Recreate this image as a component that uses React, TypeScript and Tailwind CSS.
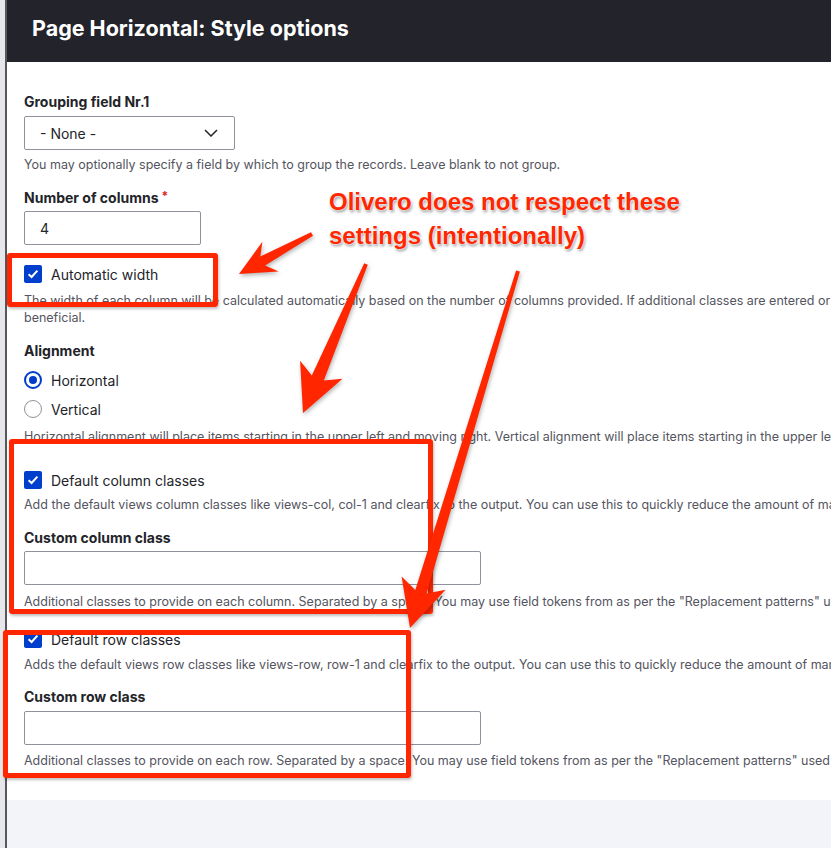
import React from "react"

type Pt = [number, number]

// tapered skitch-style arrow, shaft widens toward the head
function arrowPoints(tail: Pt, tip: Pt, tailW: number, baseW: number, headHalf: number, headLen: number) {
  const dx = tip[0] - tail[0]
  const dy = tip[1] - tail[1]
  const len = Math.hypot(dx, dy)
  const ux = dx / len
  const uy = dy / len
  const nx = -uy
  const ny = ux
  const bx = tip[0] - ux * headLen
  const by = tip[1] - uy * headLen
  const jx = tip[0] - ux * (headLen - 9)
  const jy = tip[1] - uy * (headLen - 9)
  const pts: Pt[] = [
    [tail[0] + (nx * tailW) / 2, tail[1] + (ny * tailW) / 2],
    [jx + (nx * baseW) / 2, jy + (ny * baseW) / 2],
    [bx + nx * headHalf, by + ny * headHalf],
    tip,
    [bx - nx * headHalf, by - ny * headHalf],
    [jx - (nx * baseW) / 2, jy - (ny * baseW) / 2],
    [tail[0] - (nx * tailW) / 2, tail[1] - (ny * tailW) / 2],
  ]
  return pts.map((p) => `${p[0].toFixed(1)},${p[1].toFixed(1)}`).join(" ")
}

function Checkbox({ label }: { label: string }) {
  return (
    <div className="flex h-[20px] items-center gap-[9px]">
      <span className="flex h-[18px] w-[18px] items-center justify-center rounded-[2px] bg-[#003ecc]">
        <svg width="12" height="10" viewBox="0 0 12 10">
          <path d="M1.6 5.2 4.6 8 10.4 1.6" fill="none" stroke="#fff" strokeWidth="2" />
        </svg>
      </span>
      <span className="text-[14px] text-[#232429]">{label}</span>
    </div>
  )
}

function Radio({ label, checked }: { label: string; checked?: boolean }) {
  return (
    <div className="flex h-[20px] items-center gap-[9px]">
      {checked ? (
        <span className="flex h-[18px] w-[18px] items-center justify-center rounded-full border-2 border-[#003ecc]">
          <span className="h-[8px] w-[8px] rounded-full bg-[#003ecc]" />
        </span>
      ) : (
        <span className="h-[18px] w-[18px] rounded-full border border-[#8e929c]" />
      )}
      <span className="text-[14px] text-[#232429]">{label}</span>
    </div>
  )
}

function Label({ children, required }: { children: React.ReactNode; required?: boolean }) {
  return (
    <div className="flex items-start text-[14px] leading-[18px] font-bold text-[#232429]">
      {children}
      {required && <span className="ml-[3px] text-[12px] leading-[14px] text-[#dc2323]">*</span>}
    </div>
  )
}

function Desc({ children }: { children: React.ReactNode }) {
  return <div className="whitespace-nowrap text-[12.5px] leading-[17px] text-[#545560]">{children}</div>
}

export default function App() {
  return (
    <div className="relative flex h-[848px] w-[831px] overflow-hidden bg-white [font-family:Inter,sans-serif]">
      <div className="w-[5px] shrink-0 bg-[#e6e7eb]" />
      <div className="w-[2px] shrink-0 bg-[#55565e]" />

      <div className="flex min-w-0 flex-1 flex-col overflow-hidden">
        {/* Header */}
        <div className="flex h-[62px] shrink-0 items-center bg-[#22232b] pl-[25px] pb-[6px]">
          <h1 className="whitespace-nowrap text-[21.5px] font-bold text-white">Page Horizontal: Style options</h1>
        </div>

        {/* Form */}
        <div className="flex h-[738px] shrink-0 flex-col bg-white px-[17px] pt-[31px]">
          <Label>Grouping field Nr.1</Label>
          <div className="mt-[5px] flex h-[34px] w-[211px] items-center justify-between rounded-[2px] border border-[#8e929c] pl-[15px] pr-[16px] text-[14px] text-[#232429]">
            <span>- None -</span>
            <svg width="14" height="8" viewBox="0 0 14 8">
              <path d="M1 1l6 6 6-6" fill="none" stroke="#232429" strokeWidth="1.5" />
            </svg>
          </div>
          <div className="mt-[6px]">
            <Desc>You may optionally specify a field by which to group the records. Leave blank to not group.</Desc>
          </div>

          <div className="mt-[16px]">
            <Label required>Number of columns</Label>
          </div>
          <div className="mt-[4px] flex h-[34px] w-[177px] items-center rounded-[2px] border border-[#8e929c] pl-[15px] text-[14px] text-[#232429]">
            4
          </div>

          <div className="mt-[19px]">
            <Checkbox label="Automatic width" />
          </div>
          <div className="mt-[8px]">
            <Desc>
              The width of each column will be calculated automatically based on the number of columns provided. If additional classes are entered or a theme injects classes based on a grid system, disabling this option may prove
            </Desc>
            <Desc>beneficial.</Desc>
          </div>

          <div className="mt-[16px]">
            <Label>Alignment</Label>
          </div>
          <div className="mt-[10px]">
            <Radio label="Horizontal" checked />
          </div>
          <div className="mt-[9px]">
            <Radio label="Vertical" />
          </div>
          <div className="mt-[9px]">
            <Desc>
              Horizontal alignment will place items starting in the upper left and moving right. Vertical alignment will place items starting in the upper left and moving down.
            </Desc>
          </div>

          <div className="mt-[25px]">
            <Checkbox label="Default column classes" />
          </div>
          <div className="mt-[6px]">
            <Desc>
              Add the default views column classes like views-col, col-1 and clearfix to the output. You can use this to quickly reduce the amount of markup the view provides by default, at the cost of making it more difficult to apply CSS.
            </Desc>
          </div>
          <div className="mt-[16px]">
            <Label>Custom column class</Label>
          </div>
          <div className="mt-[4px] h-[34px] w-[457px] rounded-[2px] border border-[#8e929c]" />
          <div className="mt-[8px]">
            <Desc>
              Additional classes to provide on each column. Separated by a space. You may use field tokens from as per the "Replacement patterns" used in "Rewrite the output of this field" for all fields.
            </Desc>
          </div>

          <div className="mt-[19px]">
            <Checkbox label="Default row classes" />
          </div>
          <div className="mt-[7px]">
            <Desc>
              Adds the default views row classes like views-row, row-1 and clearfix to the output. You can use this to quickly reduce the amount of markup the view provides by default, at the cost of making it more difficult to apply CSS.
            </Desc>
          </div>
          <div className="mt-[15px]">
            <Label>Custom row class</Label>
          </div>
          <div className="mt-[5px] h-[34px] w-[457px] rounded-[2px] border border-[#8e929c]" />
          <div className="mt-[7px]">
            <Desc>
              Additional classes to provide on each row. Separated by a space. You may use field tokens from as per the "Replacement patterns" used in "Rewrite the output of this field" for all fields.
            </Desc>
          </div>
        </div>

        {/* Footer */}
        <div className="flex-1 bg-[#f3f4f9]" />
      </div>

      {/* Annotations laid over the form */}
      <div className="pointer-events-none absolute inset-0">
        <div className="absolute left-[7px] top-[253px] h-[54px] w-[211px] rounded-[3px] border-[5px] border-[#ff2600] shadow-[1px_2px_3px_rgba(0,0,0,0.25)]" />
        <div className="absolute left-[9px] top-[439px] h-[175px] w-[424px] rounded-[3px] border-[5px] border-[#ff2600] shadow-[1px_2px_3px_rgba(0,0,0,0.25)]" />
        <div className="absolute left-[3px] top-[630px] h-[148px] w-[408px] rounded-[3px] border-[5px] border-[#ff2600] shadow-[1px_2px_3px_rgba(0,0,0,0.25)]" />

        <svg width="831" height="848" viewBox="0 0 831 848" className="absolute left-0 top-0 drop-shadow-[1px_2px_2px_rgba(0,0,0,0.3)]">
          <polygon points={arrowPoints([312, 234], [239, 274], 4, 10, 17, 36)} fill="#ff2600" />
          <polygon points={arrowPoints([366, 264], [303, 413], 4, 13, 23, 47)} fill="#ff2600" />
          <polygon points={arrowPoints([518, 271], [410, 628], 4, 12, 23, 47)} fill="#ff2600" />
        </svg>

        <div className="absolute left-[329px] top-[185px] text-[24px] leading-[34px] font-bold text-[#ff2600] [font-family:Liberation_Sans,Arial,sans-serif] [text-shadow:0_0_2px_#fff,0_0_2px_#fff,1px_2px_3px_rgba(0,0,0,0.45)]">
          <div className="whitespace-nowrap">Olivero does not respect these</div>
          <div className="whitespace-nowrap">settings (intentionally)</div>
        </div>
      </div>
    </div>
  )
}
